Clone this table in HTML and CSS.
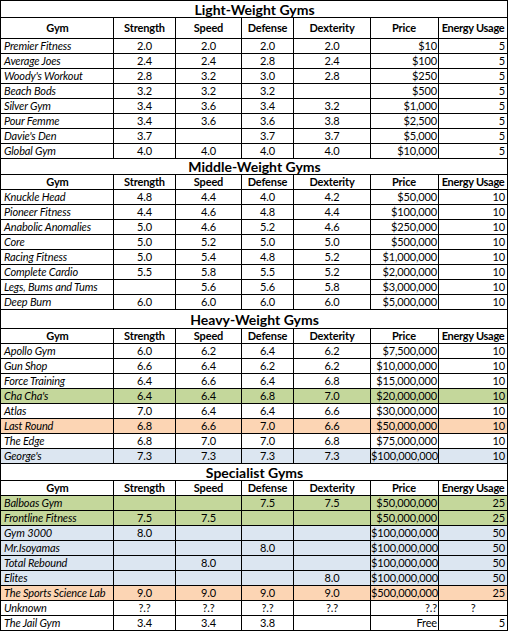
FILE: index.html
```html
<!DOCTYPE html>
<html>
<head>
<meta charset="utf-8">
<link rel="stylesheet" href="styles.css">
</head>
<body>
<table class="sheet">
<colgroup>
<col class="c-gym"><col class="c-str"><col class="c-spd"><col class="c-def"><col class="c-dex"><col class="c-price"><col class="c-en">
</colgroup>
<tbody class="light">
<tr class="title"><td colspan="7">Light-Weight Gyms</td></tr>
<tr class="head"><td>Gym</td><td>Strength</td><td>Speed</td><td>Defense</td><td>Dexterity</td><td>Price</td><td>Energy Usage</td></tr>
<tr><td>Premier Fitness</td><td>2.0</td><td>2.0</td><td>2.0</td><td>2.0</td><td>$10</td><td>5</td></tr>
<tr><td>Average Joes</td><td>2.4</td><td>2.4</td><td>2.8</td><td>2.4</td><td>$100</td><td>5</td></tr>
<tr><td>Woody's Workout</td><td>2.8</td><td>3.2</td><td>3.0</td><td>2.8</td><td>$250</td><td>5</td></tr>
<tr><td>Beach Bods</td><td>3.2</td><td>3.2</td><td>3.2</td><td></td><td>$500</td><td>5</td></tr>
<tr><td>Silver Gym</td><td>3.4</td><td>3.6</td><td>3.4</td><td>3.2</td><td>$1,000</td><td>5</td></tr>
<tr><td>Pour Femme</td><td>3.4</td><td>3.6</td><td>3.6</td><td>3.8</td><td>$2,500</td><td>5</td></tr>
<tr><td>Davie's Den</td><td>3.7</td><td></td><td>3.7</td><td>3.7</td><td>$5,000</td><td>5</td></tr>
<tr><td>Global Gym</td><td>4.0</td><td>4.0</td><td>4.0</td><td>4.0</td><td>$10,000</td><td>5</td></tr>
</tbody>
<tbody class="middle">
<tr class="title"><td colspan="7">Middle-Weight Gyms</td></tr>
<tr class="head"><td>Gym</td><td>Strength</td><td>Speed</td><td>Defense</td><td>Dexterity</td><td>Price</td><td>Energy Usage</td></tr>
<tr><td>Knuckle Head</td><td>4.8</td><td>4.4</td><td>4.0</td><td>4.2</td><td>$50,000</td><td>10</td></tr>
<tr><td>Pioneer Fitness</td><td>4.4</td><td>4.6</td><td>4.8</td><td>4.4</td><td>$100,000</td><td>10</td></tr>
<tr><td>Anabolic Anomalies</td><td>5.0</td><td>4.6</td><td>5.2</td><td>4.6</td><td>$250,000</td><td>10</td></tr>
<tr><td>Core</td><td>5.0</td><td>5.2</td><td>5.0</td><td>5.0</td><td>$500,000</td><td>10</td></tr>
<tr><td>Racing Fitness</td><td>5.0</td><td>5.4</td><td>4.8</td><td>5.2</td><td>$1,000,000</td><td>10</td></tr>
<tr><td>Complete Cardio</td><td>5.5</td><td>5.8</td><td>5.5</td><td>5.2</td><td>$2,000,000</td><td>10</td></tr>
<tr><td>Legs, Bums and Tums</td><td></td><td>5.6</td><td>5.6</td><td>5.8</td><td>$3,000,000</td><td>10</td></tr>
<tr><td>Deep Burn</td><td>6.0</td><td>6.0</td><td>6.0</td><td>6.0</td><td>$5,000,000</td><td>10</td></tr>
</tbody>
<tbody class="heavy">
<tr class="title"><td colspan="7">Heavy-Weight Gyms</td></tr>
<tr class="head"><td>Gym</td><td>Strength</td><td>Speed</td><td>Defense</td><td>Dexterity</td><td>Price</td><td>Energy Usage</td></tr>
<tr><td>Apollo Gym</td><td>6.0</td><td>6.2</td><td>6.4</td><td>6.2</td><td>$7,500,000</td><td>10</td></tr>
<tr><td>Gun Shop</td><td>6.6</td><td>6.4</td><td>6.2</td><td>6.2</td><td>$10,000,000</td><td>10</td></tr>
<tr><td>Force Training</td><td>6.4</td><td>6.6</td><td>6.4</td><td>6.8</td><td>$15,000,000</td><td>10</td></tr>
<tr class="green"><td>Cha Cha's</td><td>6.4</td><td>6.4</td><td>6.8</td><td>7.0</td><td>$20,000,000</td><td>10</td></tr>
<tr><td>Atlas</td><td>7.0</td><td>6.4</td><td>6.4</td><td>6.6</td><td>$30,000,000</td><td>10</td></tr>
<tr class="peach"><td>Last Round</td><td>6.8</td><td>6.6</td><td>7.0</td><td>6.6</td><td>$50,000,000</td><td>10</td></tr>
<tr><td>The Edge</td><td>6.8</td><td>7.0</td><td>7.0</td><td>6.8</td><td>$75,000,000</td><td>10</td></tr>
<tr class="blue"><td>George's</td><td>7.3</td><td>7.3</td><td>7.3</td><td>7.3</td><td>$100,000,000</td><td>10</td></tr>
</tbody>
<tbody class="special">
<tr class="title"><td colspan="7">Specialist Gyms</td></tr>
<tr class="head"><td>Gym</td><td>Strength</td><td>Speed</td><td>Defense</td><td>Dexterity</td><td>Price</td><td>Energy Usage</td></tr>
<tr class="green"><td>Balboas Gym</td><td></td><td></td><td>7.5</td><td>7.5</td><td>$50,000,000</td><td>25</td></tr>
<tr class="green"><td>Frontline Fitness</td><td>7.5</td><td>7.5</td><td></td><td></td><td>$50,000,000</td><td>25</td></tr>
<tr class="blue"><td>Gym 3000</td><td>8.0</td><td></td><td></td><td></td><td>$100,000,000</td><td>50</td></tr>
<tr class="blue"><td>Mr.Isoyamas</td><td></td><td></td><td>8.0</td><td></td><td>$100,000,000</td><td>50</td></tr>
<tr class="blue"><td>Total Rebound</td><td></td><td>8.0</td><td></td><td></td><td>$100,000,000</td><td>50</td></tr>
<tr class="blue"><td>Elites</td><td></td><td></td><td></td><td>8.0</td><td>$100,000,000</td><td>50</td></tr>
<tr class="peach"><td>The Sports Science Lab</td><td>9.0</td><td>9.0</td><td>9.0</td><td>9.0</td><td>$500,000,000</td><td>25</td></tr>
<tr><td>Unknown</td><td>?.?</td><td>?.?</td><td>?.?</td><td>?.?</td><td>?.?</td><td class="mid">?</td></tr>
<tr><td>The Jail Gym</td><td>3.4</td><td>3.4</td><td>3.8</td><td></td><td>Free</td><td>5</td></tr>
</tbody>
</table>
</body>
</html>
```
FILE: styles.css
```css
html, body {
  margin: 0;
  padding: 0;
  background: #ffffff;
}
.sheet {
  border-collapse: collapse;
  table-layout: fixed;
  width: 507px;
  font-family: Lato, "Open Sans", sans-serif;
  font-size: 11px;
  letter-spacing: -0.15px;
  color: #000;
}
.c-gym { width: 113px; }
.c-str { width: 62px; }
.c-spd { width: 66px; }
.c-def { width: 52px; }
.c-dex { width: 77px; }
.c-price { width: 68px; }
.c-en { width: 69px; }

.sheet td {
  border: 1px solid #000;
  padding: 0 2px 1px 2px;
  height: 13px;
  line-height: 13px;
  white-space: nowrap;
  overflow: hidden;
  text-align: center;
  vertical-align: middle;
}
.sheet td:first-child {
  text-align: left;
  font-style: italic;
  padding-left: 3px;
}
.sheet td:nth-child(6) {
  text-align: right;
  padding-right: 1px;
  padding-left: 0;
}
.sheet td:nth-child(7) {
  text-align: right;
}
.sheet td.mid {
  text-align: center;
}
.sheet tr.title td {
  font-weight: bold;
  font-style: normal;
  font-size: 14px;
  letter-spacing: 0;
  text-align: center;
  height: 16px;
  padding-bottom: 0;
  line-height: 15px;
}
.sheet tr.head td {
  font-weight: bold;
  font-style: normal;
  text-align: center;
  height: 13px;
}
.sheet tr.head td:last-child {
  letter-spacing: -0.3px;
  padding: 0 1px 1px 1px;
}
.light tr.head td { height: 19px; }
.middle tr.title td { height: 14px; }
.heavy tr.title td { height: 18px; }
.special tr.title td { height: 16px; }

.sheet tr.green td { background: #c4d79b; }
.sheet tr.peach td { background: #fcd5b4; }
.sheet tr.blue td { background: #dce6f1; }
```
